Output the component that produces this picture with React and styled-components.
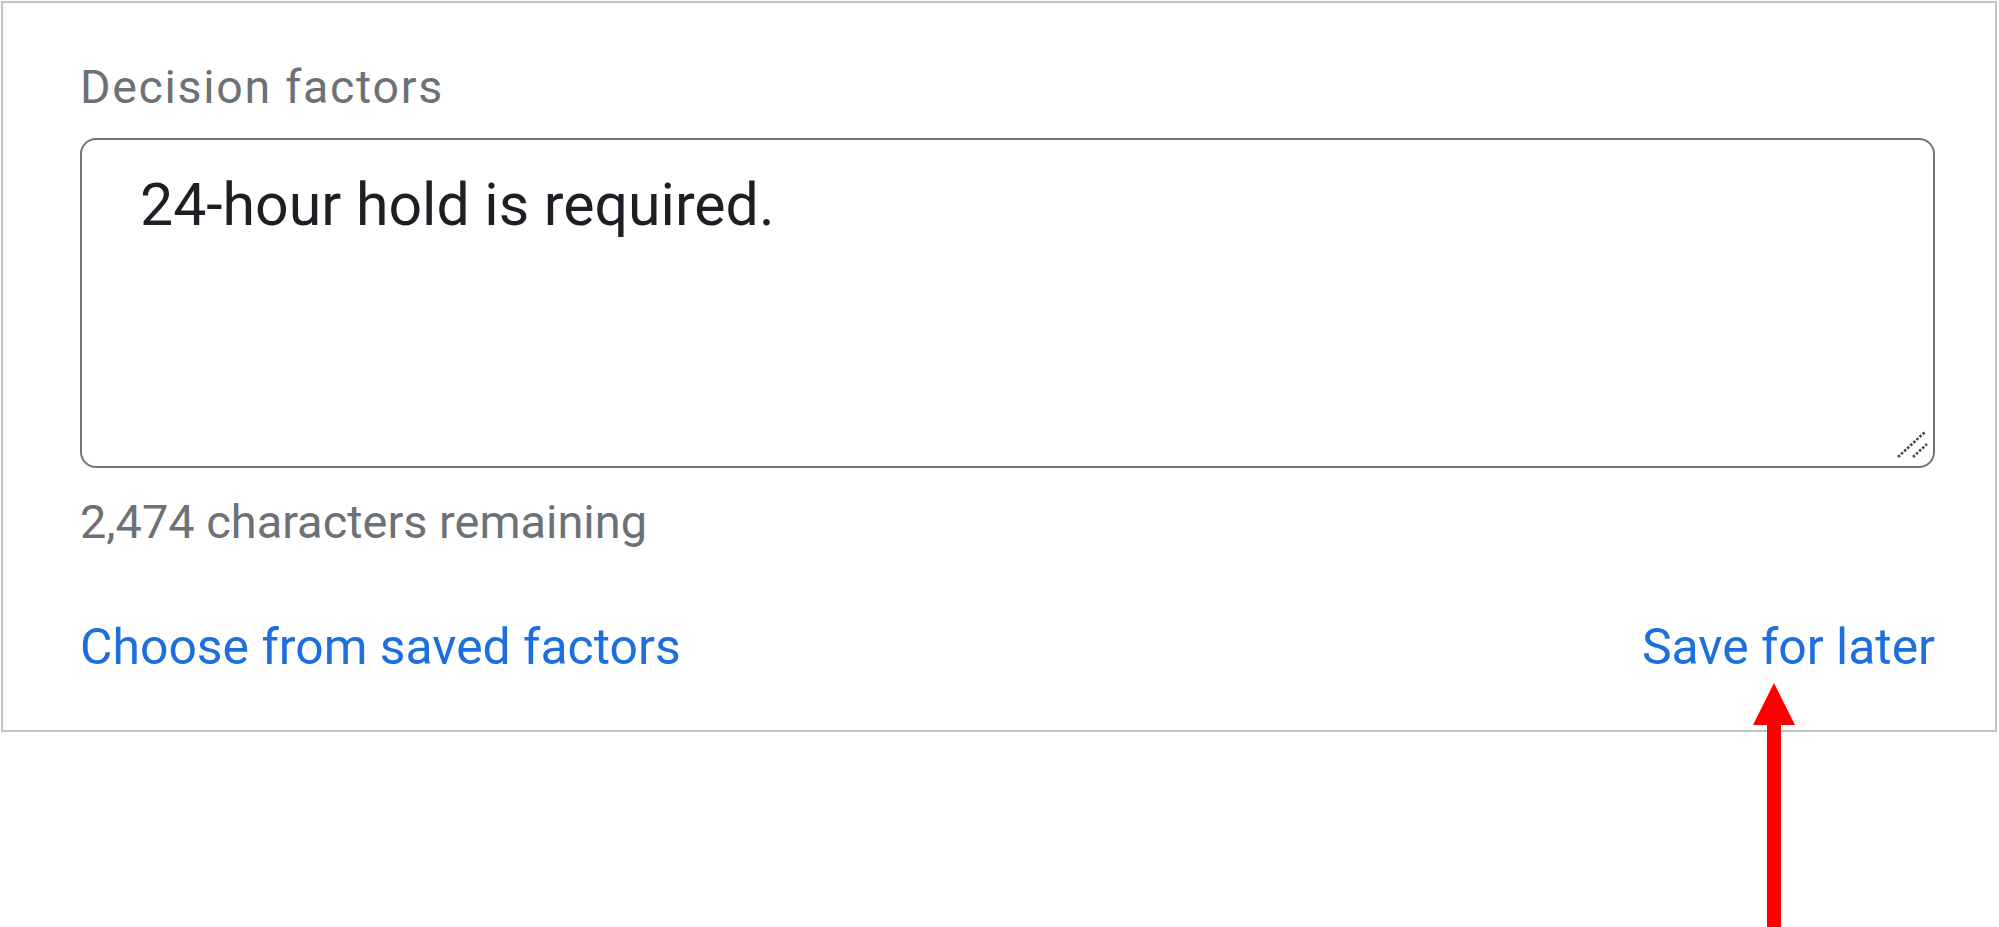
import React from "react";
import styled, { createGlobalStyle } from "styled-components";

const Global = createGlobalStyle`
  html, body {
    margin: 0;
    padding: 0;
    background: #ffffff;
  }
  body {
    font-family: Roboto, "Liberation Sans", Arial, sans-serif;
    width: 1999px;
    height: 927px;
    overflow: hidden;
    position: relative;
  }
  * { box-sizing: border-box; }
`;

const Panel = styled.section`
  margin: 1px 0 0 1px;
  width: 1996px;
  border: 2px solid #c4c4c4;
  padding: 57px 60px 53px 77px;
  display: flex;
  flex-direction: column;
  background: #fff;
`;

const Label = styled.label`
  font-size: 46.5px;
  line-height: 1.172;
  color: #6c7176;
  letter-spacing: 1.7px;
  margin-bottom: 24px;
`;

const Field = styled.div`
  position: relative;
`;

const TextArea = styled.textarea`
  display: block;
  width: 100%;
  height: 330px;
  margin: 0;
  border: 2.5px solid #6f767d;
  border-radius: 16px;
  padding: 30px 20px 0 58px;
  font-family: Roboto, "Liberation Sans", Arial, sans-serif;
  font-size: 59px;
  line-height: 1.172;
  color: #1c1f23;
  background: #fff;
  outline: none;
  resize: none;
`;

const Grip = styled.svg`
  position: absolute;
  right: 6px;
  bottom: 7px;
  width: 34px;
  height: 32px;
  pointer-events: none;
`;

const Counter = styled.div`
  margin-top: 27px;
  font-size: 46.9px;
  line-height: 1.172;
  color: #6c7176;
`;

const Actions = styled.div`
  margin-top: 68px;
  display: flex;
  justify-content: space-between;
  align-items: baseline;
`;

const LinkButton = styled.a`
  font-size: 49.9px;
  line-height: 1.172;
  color: #1d6fe0;
  text-decoration: none;
  cursor: pointer;
`;

const Arrow = styled.svg`
  position: absolute;
  left: 1753px;
  top: 683px;
  width: 42px;
  height: 244px;
`;

export default function App() {
  return (
    <>
      <Global />
      <Panel>
        <Label htmlFor="factors">Decision factors</Label>
        <Field>
          <TextArea id="factors" defaultValue="24-hour hold is required." />
          <Grip viewBox="0 0 34 32" aria-hidden="true">
            <g stroke="#474c52" strokeWidth="2.6" strokeDasharray="2.6 1.6" strokeLinecap="butt">
              <line x1="3" y1="28" x2="30" y2="3" />
              <line x1="18" y1="28" x2="32" y2="15" />
            </g>
          </Grip>
        </Field>
        <Counter>2,474 characters remaining</Counter>
        <Actions>
          <LinkButton>Choose from saved factors</LinkButton>
          <LinkButton>Save for later</LinkButton>
        </Actions>
      </Panel>
      <Arrow viewBox="0 0 42 244" aria-hidden="true">
        <polygon points="21,0 42,42 0,42" fill="#ff0000" />
        <rect x="14" y="41" width="14" height="203" fill="#ff0000" />
      </Arrow>
    </>
  );
}
